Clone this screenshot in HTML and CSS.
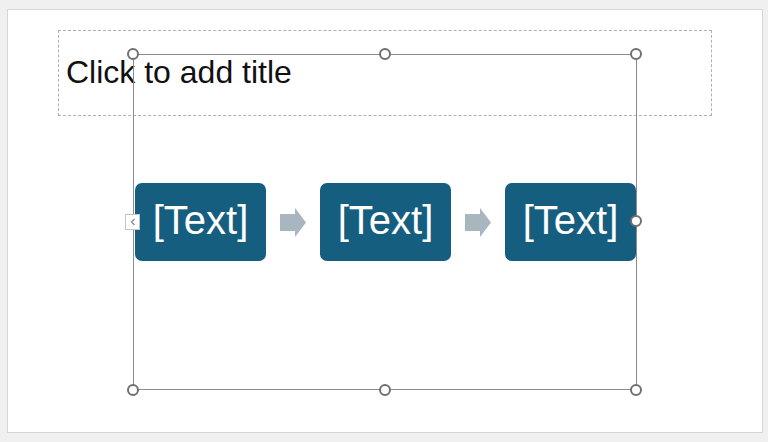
FILE: index.html
```html
<!DOCTYPE html>
<html>
<head>
<meta charset="utf-8">
<link rel="stylesheet" href="styles.css">
</head>
<body>
<div class="slide">
  <div class="title-ph"><span class="title-text">Click to add title</span></div>
  <div class="frame">
    <div class="row">
      <div class="box">[Text]</div>
      <svg class="arrow" width="26" height="29" viewBox="0 0 26 29"><polygon points="0,6 15,6 15,0 26,14.5 15,29 15,23 0,23" fill="#a8b6c0"/></svg>
      <div class="box">[Text]</div>
      <svg class="arrow" width="26" height="29" viewBox="0 0 26 29"><polygon points="0,6 15,6 15,0 26,14.5 15,29 15,23 0,23" fill="#a8b6c0"/></svg>
      <div class="box">[Text]</div>
    </div>
    <span class="h h-tl"></span>
    <span class="h h-tm"></span>
    <span class="h h-tr"></span>
    <span class="h h-mr"></span>
    <span class="h h-bl"></span>
    <span class="h h-bm"></span>
    <span class="h h-br"></span>
    <span class="tab"><svg width="6" height="8" viewBox="0 0 6 8"><polyline points="4.5,1 1.5,4 4.5,7" fill="none" stroke="#8a8a8a" stroke-width="1.3"/></svg></span>
  </div>
</div>
</body>
</html>
```
FILE: styles.css
```css
html, body {
  margin: 0;
  padding: 0;
  background: #f0f0f0;
  width: 768px;
  height: 442px;
  overflow: hidden;
}
.slide {
  position: relative;
  margin: 9px 0 0 7px;
  width: 754px;
  height: 422px;
  background: #ffffff;
  border: 1px solid #d6d6d6;
}
.title-ph {
  position: absolute;
  left: 50px;
  top: 20px;
  width: 652px;
  height: 84px;
  border: 1px dashed #b0b0b0;
  box-sizing: content-box;
}
.title-text {
  display: block;
  margin: 23px 0 0 7px;
  font-family: "Liberation Sans", Arial, sans-serif;
  font-size: 32px;
  line-height: 36px;
  color: #111111;
}
.frame {
  position: absolute;
  left: 125px;
  top: 44px;
  width: 502px;
  height: 334px;
  border: 1px solid #8c8c8c;
}
.row {
  display: flex;
  align-items: center;
  padding: 128px 0 0 1px;
}
.box {
  width: 131px;
  height: 78px;
  background: #165e80;
  border-radius: 7px;
  color: #ffffff;
  font-family: "Liberation Sans", Arial, sans-serif;
  font-size: 40px;
  line-height: 44px;
  padding-bottom: 4px;
  box-sizing: border-box;
  display: flex;
  align-items: center;
  justify-content: center;
}
.arrow {
  display: block;
  margin: 0 14px;
}
.h {
  position: absolute;
  width: 8px;
  height: 8px;
  border: 2px solid #707070;
  border-radius: 50%;
  background: #ffffff;
}
.h-tl { left: -7px; top: -7px; }
.h-tm { left: 245px; top: -7px; }
.h-tr { left: 496px; top: -7px; }
.h-mr { left: 496px; top: 160px; }
.h-bl { left: -7px; bottom: -7px; }
.h-bm { left: 245px; bottom: -7px; }
.h-br { left: 496px; bottom: -7px; }
.tab {
  position: absolute;
  left: -9px;
  top: 159px;
  width: 13px;
  height: 14px;
  background: #ffffff;
  border: 1px solid #c4c4c4;
  display: flex;
  align-items: center;
  justify-content: center;
}
```
